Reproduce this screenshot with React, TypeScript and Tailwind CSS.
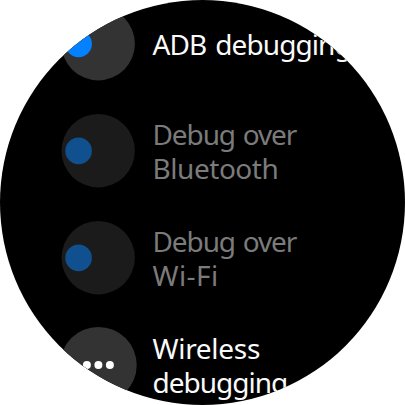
import clsx from "clsx";

type Line = { text: string; tracking: string };

type Setting = {
  lines: Line[];
  kind: "toggle" | "more";
  disabled?: boolean;
};

const settings: Setting[] = [
  {
    lines: [
      { text: "ADB debugging", tracking: "tracking-[-0.9px] [word-spacing:2.5px]" },
    ],
    kind: "toggle",
  },
  {
    lines: [
      { text: "Debug over", tracking: "tracking-[-1.1px] [word-spacing:1.5px]" },
      { text: "Bluetooth", tracking: "tracking-[-0.45px]" },
    ],
    kind: "toggle",
    disabled: true,
  },
  {
    lines: [
      { text: "Debug over", tracking: "tracking-[-1.1px] [word-spacing:1.5px]" },
      { text: "Wi-Fi", tracking: "tracking-[0.4px]" },
    ],
    kind: "toggle",
    disabled: true,
  },
  {
    lines: [
      { text: "Wireless", tracking: "tracking-[-0.3px]" },
      { text: "debugging", tracking: "tracking-[-1px]" },
    ],
    kind: "more",
  },
];

function Toggle({ disabled }: { disabled?: boolean }) {
  return (
    <svg viewBox="0 0 78 78" className="h-[78px] w-[78px]">
      <circle cx="39.2" cy="38.7" r="36.7" fill={disabled ? "#1b1b1b" : "#333333"} />
      <circle cx="19.6" cy="38.9" r="13.3" fill={disabled ? "#10508f" : "#0381fe"} />
    </svg>
  );
}

function More() {
  return (
    <svg viewBox="0 0 78 78" className="h-[78px] w-[78px]">
      <circle cx="39.4" cy="39.2" r="38.3" fill="#333333" />
      <g fill="#ffffff">
        <circle cx="27.9" cy="39" r="4" />
        <circle cx="39.4" cy="39" r="4" />
        <circle cx="50.9" cy="39" r="4" />
      </g>
    </svg>
  );
}

function SettingRow({ setting }: { setting: Setting }) {
  return (
    <li className="flex h-[107px] shrink-0 items-center">
      {setting.kind === "toggle" ? <Toggle disabled={setting.disabled} /> : <More />}
      <div
        className={clsx(
          "ml-[15.5px] text-[28px] leading-[34px] whitespace-nowrap",
          setting.disabled ? "text-[#7b7b7b]" : "text-[#fafafa]",
        )}
      >
        {setting.lines.map((line) => (
          <p key={line.text} className={line.tracking}>
            {line.text}
          </p>
        ))}
      </div>
    </li>
  );
}

export default function App() {
  return (
    <div className="h-[405px] w-[405px] bg-white font-['Noto_Sans',sans-serif] antialiased">
      <main className="h-full w-full overflow-hidden rounded-full bg-black">
        <ul className="-mt-[10px] flex flex-col pl-[59px]">
          {settings.map((setting) => (
            <SettingRow
              key={setting.lines.map((line) => line.text).join(" ")}
              setting={setting}
            />
          ))}
        </ul>
      </main>
    </div>
  );
}
